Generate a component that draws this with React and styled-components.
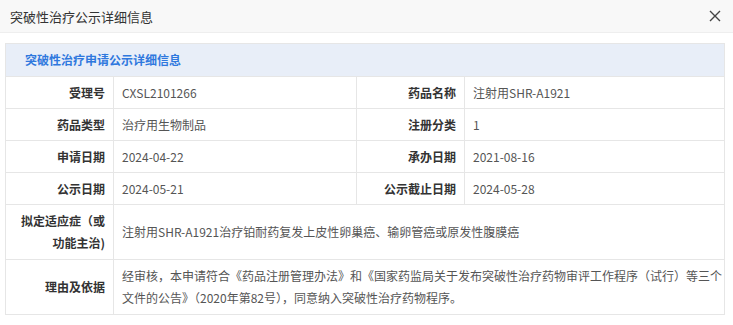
import React from "react";
import styled, { createGlobalStyle } from "styled-components";

const GlobalStyle = createGlobalStyle`
  html, body {
    margin: 0;
    padding: 0;
    background: #fff;
    font-family: "Noto Sans CJK SC", "Noto Sans", sans-serif;
  }
`;

const rows = [
  [["受理号", "CXSL2101266"], ["药品名称", "注射用SHR-A1921"]],
  [["药品类型", "治疗用生物制品"], ["注册分类", "1"]],
  [["申请日期", "2024-04-22"], ["承办日期", "2021-08-16"]],
  [["公示日期", "2024-05-21"], ["公示截止日期", "2024-05-28"]],
];

function App() {
  return (
    <Page>
      <GlobalStyle />
      <TitleBar>
        <span>突破性治疗公示详细信息</span>
        <Close aria-label="关闭">
          <svg width="12" height="12" viewBox="0 0 12 12">
            <path d="M1 1L11 11M11 1L1 11" stroke="#444" strokeWidth="1.4" />
          </svg>
        </Close>
      </TitleBar>
      <Table>
        <Caption>突破性治疗申请公示详细信息</Caption>
        {rows.map((row, i) =>
          row.map(([label, value], j) => (
            <React.Fragment key={`${i}-${j}`}>
              <Label>{label}</Label>
              <Value>{value}</Value>
            </React.Fragment>
          ))
        )}
        <Label $tall>
          拟定适应症（或
          <br />
          功能主治)
        </Label>
        <Value $wide $tall>注射用SHR-A1921治疗铂耐药复发上皮性卵巢癌、输卵管癌或原发性腹膜癌</Value>
        <Label $tall>理由及依据</Label>
        <Value $wide $tall>
          经审核，本申请符合《药品注册管理办法》和《国家药监局关于发布突破性治疗药物审评工作程序（试行）等三个文件的公告》（2020年第82号），同意纳入突破性治疗药物程序。
        </Value>
      </Table>
    </Page>
  );
}

const Page = styled.div`
  width: 733px;
  height: 325px;
  background: #fff;
`;

const TitleBar = styled.div`
  height: 32px;
  display: flex;
  align-items: center;
  justify-content: space-between;
  padding: 0 10px;
  background: #f8f8f8;
  border-bottom: 1px solid #eeeeee;
  font-size: 13px;
  color: #333;
`;

const Close = styled.button`
  border: none;
  background: none;
  padding: 0;
  margin-right: 2px;
  display: flex;
  cursor: pointer;
`;

const Table = styled.div`
  margin: 10px 8px 0 5px;
  display: grid;
  grid-template-columns: 108px 243px 108px 1fr;
  border-top: 1px solid #e6e6e6;
  border-left: 1px solid #e6e6e6;
  font-size: 12px;
`;

const Cell = styled.div`
  min-height: 32px;
  display: flex;
  align-items: center;
  border-right: 1px solid #e6e6e6;
  border-bottom: 1px solid #e6e6e6;
  box-sizing: border-box;
  line-height: 22px;
`;

const Caption = styled(Cell)`
  grid-column: 1 / -1;
  background: #e8eef8;
  color: #2f78de;
  font-weight: bold;
  padding-left: 19px;
  min-height: 33px;
`;

const Label = styled(Cell)`
  justify-content: flex-end;
  text-align: right;
  padding: ${(p) => (p.$tall ? "5px 8px" : "0 8px")};
  color: #333;
  font-weight: bold;
  min-height: ${(p) => (p.$tall ? "54px" : "32px")};
`;

const Value = styled(Cell)`
  grid-column: ${(p) => (p.$wide ? "2 / -1" : "auto")};
  padding: ${(p) => (p.$tall ? "5px 2px 5px 8px" : "0 8px")};
  color: #555;
  min-height: ${(p) => (p.$tall ? "54px" : "32px")};
`;

export default App;
